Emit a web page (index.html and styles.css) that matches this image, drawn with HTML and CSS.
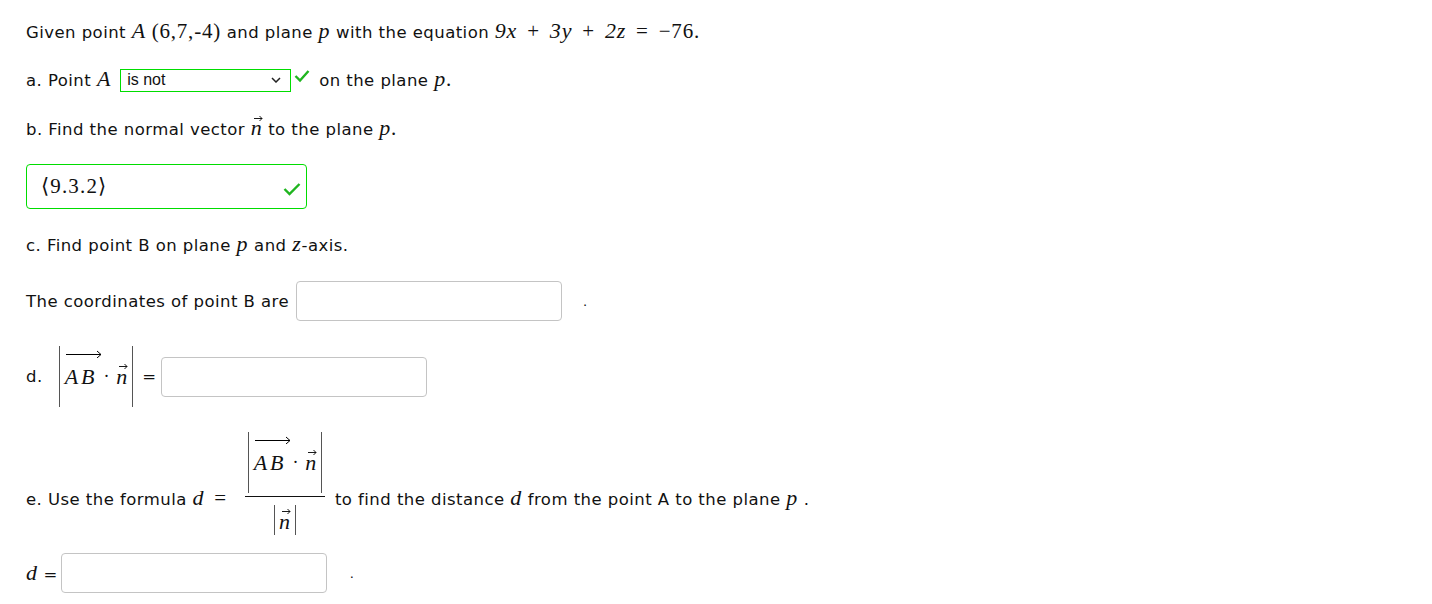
FILE: index.html
```html
<!DOCTYPE html>
<html lang="en">
<head>
    <meta charset="UTF-8">
    <title>Distance from a point to a plane</title>
    <link rel="stylesheet" href="styles.css">
</head>
<body>
    <div class="problem">
        <p class="line intro">Given point <span class="m">A</span> <span class="num">(6,7,-4)</span> and plane <span class="m">p</span> with the equation <span class="num"><span class="m">9x</span><span class="op">+</span><span class="m">3y</span><span class="op">+</span><span class="m">2z</span><span class="op">=</span>&minus;76.</span></p>

        <p class="line part-a">
            <span>a. Point <span class="m">A</span></span>
            <span class="select correct">
                <span>is not</span>
                <svg class="chevron" width="10" height="6" viewBox="0 0 10 6"><path d="M1 1 L5 5 L9 1" fill="none" stroke="#222" stroke-width="1.5"/></svg>
            </span>
            <svg class="check small" width="16" height="14" viewBox="0 0 16 14"><path d="M1.5 7 L6 11.5 L14.5 2" fill="none" stroke="#1fb51f" stroke-width="2.4"/></svg>
            <span class="after">on the plane <span class="m">p</span><span class="num">.</span></span>
        </p>

        <p class="line part-b">b. Find the normal vector <span class="vec n"><span class="m">n</span><svg width="9" height="6" viewBox="0 0 9 6"><path d="M0 3.5 H8 M5.5 1 L8 3.5 L5.5 6" fill="none" stroke="#000" stroke-width="0.9"/></svg></span> to the plane <span class="m">p</span><span class="num">.</span></p>

        <div class="answer correct">
            <span class="num">&#x27E8;9.3.2&#x27E9;</span>
            <svg class="check" width="18" height="14" viewBox="0 0 18 14"><path d="M1.5 7 L6.5 12 L16.5 2" fill="none" stroke="#1fb51f" stroke-width="2.4"/></svg>
        </div>

        <p class="line part-c">c. Find point B on plane <span class="m">p</span> and <span class="m">z</span>-axis.</p>

        <div class="row coords">
            <span>The coordinates of point B are</span>
            <span class="field wide"></span>
            <span class="dot">.</span>
        </div>

        <div class="row part-d">
            <span>d.</span>
            <span class="abs tall">
                <span class="vec ab"><span class="m">AB</span><svg width="36" height="8" viewBox="0 0 36 8"><path d="M0 4.5 H35 M31 1 L35 4.5 L31 8" fill="none" stroke="#000" stroke-width="1"/></svg></span>
                <span class="num cdot">&middot;</span>
                <span class="vec n"><span class="m">n</span><svg width="9" height="6" viewBox="0 0 9 6"><path d="M0 3.5 H8 M5.5 1 L8 3.5 L5.5 6" fill="none" stroke="#000" stroke-width="0.9"/></svg></span>
            </span>
            <span class="eq">=</span>
            <span class="field wide"></span>
        </div>

        <div class="row part-e">
            <span class="lead">e. Use the formula <span class="m">d</span><span class="num op">=</span></span>
            <span class="frac">
                <span class="abs tall">
                    <span class="vec ab"><span class="m">AB</span><svg width="36" height="8" viewBox="0 0 36 8"><path d="M0 4.5 H35 M31 1 L35 4.5 L31 8" fill="none" stroke="#000" stroke-width="1"/></svg></span>
                    <span class="num cdot">&middot;</span>
                    <span class="vec n"><span class="m">n</span><svg width="9" height="6" viewBox="0 0 9 6"><path d="M0 3.5 H8 M5.5 1 L8 3.5 L5.5 6" fill="none" stroke="#000" stroke-width="0.9"/></svg></span>
                </span>
                <span class="bar"></span>
                <span class="abs short">
                    <span class="vec n"><span class="m">n</span><svg width="9" height="6" viewBox="0 0 9 6"><path d="M0 3.5 H8 M5.5 1 L8 3.5 L5.5 6" fill="none" stroke="#000" stroke-width="0.9"/></svg></span>
                </span>
            </span>
            <span class="lead">to find the distance <span class="m">d</span> from the point A to the plane <span class="m">p</span> .</span>
        </div>

        <div class="row result">
            <span><span class="m">d</span> =</span>
            <span class="field"></span>
            <span class="dot">.</span>
        </div>
    </div>
</body>
</html>
```

FILE: styles.css
```css
body {
    margin: 0;
    font-family: "DejaVu Sans", Verdana, sans-serif;
    font-size: 16.5px;
    letter-spacing: 0.45px;
    color: #111;
    background: #fff;
}
.problem {
    padding: 19px 26px;
}
.line {
    margin: 0;
    line-height: 24px;
    height: 24px;
    white-space: nowrap;
}
.m {
    font-family: "Liberation Serif", "Times New Roman", serif;
    font-style: italic;
    font-size: 22px;
    letter-spacing: 0.8px;
}
.num {
    font-family: "Liberation Serif", "Times New Roman", serif;
    font-size: 21px;
    letter-spacing: 0.8px;
}
.op {
    margin: 0 10px;
}
.part-a {
    margin-top: 25px;
    display: flex;
    align-items: center;
}
.select {
    display: inline-flex;
    align-items: center;
    justify-content: space-between;
    box-sizing: border-box;
    width: 171px;
    height: 23px;
    padding: 0 9px 0 6px;
    margin-left: 9px;
    font-family: "Liberation Sans", Arial, sans-serif;
    font-size: 16px;
    letter-spacing: 0;
    border: 1px solid #00dd00;
    color: #111;
}
.check.small {
    margin: -8px 0 0 3px;
}
.after {
    margin-left: 9px;
}
.part-b {
    margin-top: 24px;
}
.vec {
    position: relative;
    display: inline-block;
}
.vec svg {
    position: absolute;
}
.vec.n svg {
    left: 3px;
    top: -1px;
}
.vec.ab .m {
    letter-spacing: 3px;
}
.vec.ab svg {
    left: 1px;
    top: -14px;
}
.answer {
    margin-top: 24px;
    box-sizing: border-box;
    width: 281px;
    height: 45px;
    border: 1px solid #00dd00;
    border-radius: 4px;
    display: flex;
    align-items: center;
    justify-content: space-between;
    padding: 0 5px 0 14px;
}
.answer .num {
    font-size: 21px;
    letter-spacing: 1.2px;
}
.answer .check {
    margin-top: 4px;
}
.part-c {
    margin-top: 23px;
}
.row {
    display: flex;
    align-items: center;
    white-space: nowrap;
}
.field {
    display: inline-block;
    box-sizing: border-box;
    width: 266px;
    height: 40px;
    border: 1px solid #c4c4c4;
    border-radius: 4px;
}
.coords {
    margin-top: 25px;
    gap: 7px;
}
.coords .dot {
    margin-left: 14px;
}
.dot {
    font-size: 13px;
}
.part-d {
    margin-top: 25px;
}
.abs {
    display: inline-flex;
    align-items: center;
    gap: 6px;
    border-left: 1px solid #555;
    border-right: 1px solid #555;
    box-sizing: border-box;
}
.abs.tall {
    height: 61px;
    padding: 0 4px 0 5px;
}
.part-d .abs {
    margin-left: 16px;
}
.cdot {
    font-size: 18px;
}
.eq {
    margin: 0 5px 0 9px;
}
.part-e {
    margin-top: 25px;
    align-items: flex-start;
}
.part-e .lead {
    margin-top: 54px;
    line-height: 24px;
}
.frac {
    display: inline-flex;
    flex-direction: column;
    align-items: center;
    margin: 0 10px 0 8px;
}
.frac .bar {
    display: block;
    width: 80px;
    height: 1px;
    background: #111;
    margin: 3px 0 8px;
}
.abs.short {
    height: 30px;
    padding: 3px 4px 0 4px;
}
.result {
    margin-top: 18px;
    gap: 3px;
}
.result .dot {
    margin-left: 20px;
}
```
